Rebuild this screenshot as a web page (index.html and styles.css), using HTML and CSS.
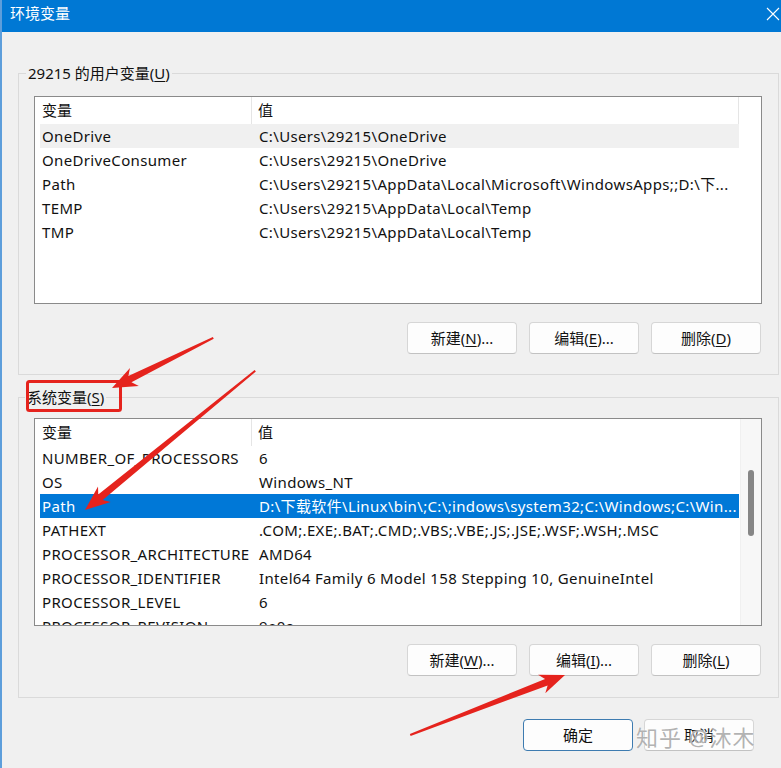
FILE: index.html
```html
<!DOCTYPE html>
<html lang="zh-CN">
<head>
  <meta charset="UTF-8">
  <title>环境变量</title>
  <link rel="stylesheet" href="styles.css">
</head>
<body>
<div class="window">
  <div class="titlebar">
    <span class="title">环境变量</span>
    <svg class="close" width="14" height="14" viewBox="0 0 14 14"><path d="M1 1L13 13M13 1L1 13" stroke="#fff" stroke-width="1.1" fill="none"/></svg>
  </div>

  <fieldset class="group group-user">
    <legend>29215 的用户变量(<u>U</u>)</legend>
    <div class="list">
      <div class="list-main">
        <div class="head"><span class="c1">变量</span><span class="c2 last">值</span></div>
        <div class="row hot"><span class="c1">OneDrive</span><span class="c2">C:\Users\29215\OneDrive</span></div>
        <div class="row"><span class="c1">OneDriveConsumer</span><span class="c2">C:\Users\29215\OneDrive</span></div>
        <div class="row"><span class="c1">Path</span><span class="c2">C:\Users\29215\AppData\Local\Microsoft\WindowsApps;;D:\下...</span></div>
        <div class="row"><span class="c1">TEMP</span><span class="c2">C:\Users\29215\AppData\Local\Temp</span></div>
        <div class="row"><span class="c1">TMP</span><span class="c2">C:\Users\29215\AppData\Local\Temp</span></div>
      </div>
    </div>
    <div class="btns">
      <button>新建(<u>N</u>)...</button>
      <button>编辑(<u>E</u>)...</button>
      <button>删除(<u>D</u>)</button>
    </div>
  </fieldset>

  <fieldset class="group group-sys">
    <legend>系统变量(<u>S</u>)</legend>
    <div class="list">
      <div class="list-main">
        <div class="head"><span class="c1">变量</span><span class="c2">值</span></div>
        <div class="row"><span class="c1">NUMBER_OF_PROCESSORS</span><span class="c2">6</span></div>
        <div class="row"><span class="c1">OS</span><span class="c2">Windows_NT</span></div>
        <div class="row selected"><span class="c1">Path</span><span class="c2">D:\下载软件\Linux\bin\;C:\;indows\system32;C:\Windows;C:\Win...</span></div>
        <div class="row"><span class="c1">PATHEXT</span><span class="c2">.COM;.EXE;.BAT;.CMD;.VBS;.VBE;.JS;.JSE;.WSF;.WSH;.MSC</span></div>
        <div class="row"><span class="c1">PROCESSOR_ARCHITECTURE</span><span class="c2">AMD64</span></div>
        <div class="row"><span class="c1">PROCESSOR_IDENTIFIER</span><span class="c2">Intel64 Family 6 Model 158 Stepping 10, GenuineIntel</span></div>
        <div class="row"><span class="c1">PROCESSOR_LEVEL</span><span class="c2">6</span></div>
        <div class="row"><span class="c1">PROCESSOR_REVISION</span><span class="c2">9e0a</span></div>
      </div>
      <div class="vscroll"><div class="thumb"></div></div>
    </div>
    <div class="btns">
      <button>新建(<u>W</u>)...</button>
      <button>编辑(<u>I</u>)...</button>
      <button>删除(<u>L</u>)</button>
    </div>
  </fieldset>

  <div class="footer">
    <button class="default">确定</button>
    <button>取消</button>
  </div>

  <!-- 标注：红框和箭头 -->
  <svg class="marks" width="781" height="768" viewBox="0 0 781 768">
    <rect x="27.5" y="381.5" width="93" height="29" rx="2" fill="none" stroke="#e5231d" stroke-width="3"/>
    <g fill="#e5231d">
      <polygon transform="translate(112 388) rotate(-26.3)" points="0,0 25,-10 20,-3.5 113,-1 113,1 20,3.5 25,10"/>
      <polygon transform="translate(85 510) rotate(-39.3)" points="0,0 25,-10 20,-3.5 220,-1 220,1 20,3.5 25,10"/>
      <polygon transform="translate(565 675) rotate(158.8)" points="0,0 25,-10 20,-3.5 166,-1 166,1 20,3.5 25,10"/>
    </g>
  </svg>
  <div class="watermark">知乎 @沐木</div>
</div>
</body>
</html>
```

FILE: styles.css
```css
  * { margin : 0; padding : 0; box-sizing : border-box; }

  body { background : #f0f0f0; font : 15px/20px "Noto Sans", "Noto Sans CJK SC", sans-serif; color : #111; overflow : hidden; }

  u { text-decoration : underline; text-underline-offset : 2px; }

  .window { position : relative; width : 781px; height : 768px; background : #f0f0f0; border-left : 2px solid #5d9edb; overflow : hidden; }

  /* ==========标题栏========== */
  .titlebar { height : 32px; background : #0078d4; color : #fff; display : flex; align-items : center; justify-content : space-between; padding : 0 0 6px 10px; margin-left : -2px; }
  .titlebar .title { font-size : 15px; }
  .titlebar .close { margin : 7px 1px 0 0; align-self : flex-start; }

  /* ==========分组========== */
  .group { width : 761px; margin-left : 16px; border : 1px solid #dadada; padding : 13px 16px 20px 15px; }
  .group legend { margin-left : -8px; padding : 0 2px; line-height : 20px; }
  .group-user { margin-top : 31px; }
  .group-sys { margin-top : 12px; padding-top : 11px; padding-bottom : 21px; }
  .group-sys legend { margin-left : -9px; }

  /* ==========列表========== */
  .list { height : 208px; border : 1px solid #8a8a8a; background : #fff; display : flex; overflow : hidden; }
  .list-main { flex : 1; overflow : hidden; }
  .head { display : flex; height : 27px; line-height : 27px; }
  .head .c1 { width : 217px; padding-left : 7px; border-right : 1px solid #e5e5e5; }
  .head .c2 { width : 487px; padding-left : 6px; }
  .head .c2.last { border-right : 1px solid #e5e5e5; }
  .row { display : flex; height : 24px; line-height : 24px; margin-left : 5px; width : 699px; white-space : nowrap; letter-spacing : 0.35px; }
  .row span { overflow : hidden; }
  .row .c1 { width : 212px; padding-left : 2px; }
  .row .c2 { width : 487px; padding-left : 7px; }
  .row.hot { background : #f0f0f0; }
  .row.selected { background : #0078d7; color : #fff; }

  .vscroll { width : 21px; background : #f7f7f7; border-left : 1px solid #f0f0f0; padding : 51px 0 0 7px; }
  .thumb { width : 6px; height : 66px; background : #868686; border-radius : 3px; }

  /* ==========按钮========== */
  .btns { display : flex; justify-content : flex-end; gap : 12px; margin-top : 18px; padding-right : 1px; }
  button { width : 110px; height : 32px; font : inherit; color : #111; background : #fdfdfd; border : 1px solid #d6d6d6; border-bottom-color : #c2c2c2; border-radius : 4px; }
  .footer { display : flex; justify-content : flex-end; gap : 11px; margin-top : 21px; padding-right : 27px; }
  .footer .default { border-color : #3d7bb0; }

  .marks { position : absolute; left : -2px; top : 0; pointer-events : none; }
  .watermark { position : absolute; left : 634px; top : 722px; font-size : 22px; line-height : 30px; color : rgba(165, 165, 165, 0.85); text-shadow : 0 0 2px #fff; letter-spacing : 1px; }
```
